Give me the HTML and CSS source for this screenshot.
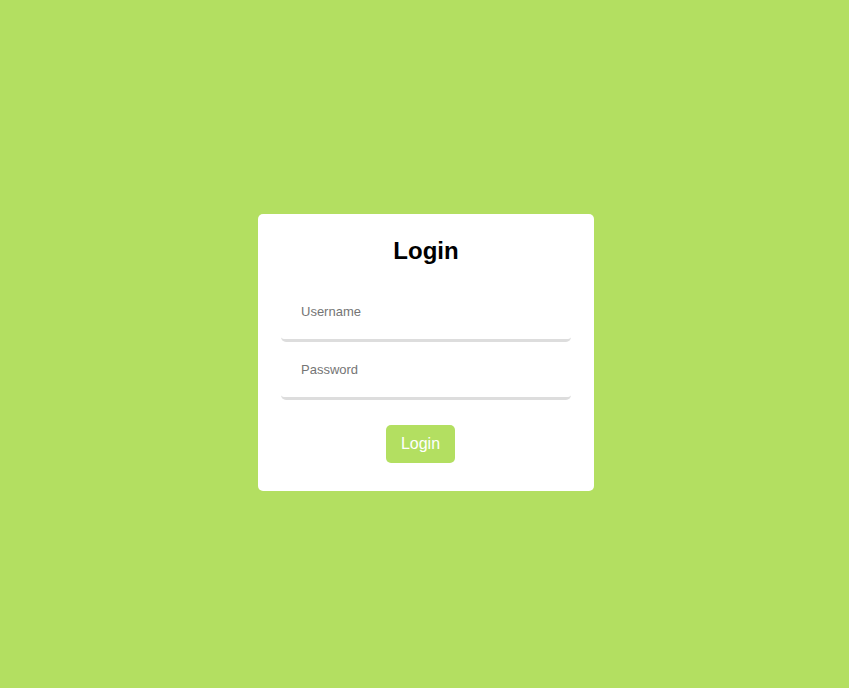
FILE: index.html
```html
<!DOCTYPE html>
<html lang="en">
  <head>
    <meta charset="UTF-8" />
    <meta name="viewport" content="width=device-width, initial-scale=1.0" />
    <title>Login</title>
    <link rel="stylesheet" href="styles.css">
  </head>
  <body>
    <div class="login-box">
      <h2>Login</h2>
      <form class="form">
        <input type="text" class="field" placeholder="Username" />
        <input type="password" class="field" placeholder="Password" />
        <div class="actions">
          <button type="submit" class="login-btn">Login</button>
        </div>
      </form>
    </div>
  </body>
</html>
```

FILE: styles.css
```css
* {
  box-sizing: border-box;
}
body {
  height: 100vh;
  padding-left: 3px;
  background-color: #b3df61;
  font-family: "Liberation Sans", Arial, sans-serif;
  display: flex;
  justify-content: center;
  align-items: center;
}
.login-box {
  width: 336px;
  background-color: #fff;
  border-radius: 5px;
  padding: 23px 23px 28px;
}
h2 {
  margin: 0 0 19px;
  text-align: center;
  font-size: 24px;
  line-height: 28px;
  color: #000;
}
.field {
  display: block;
  width: 100%;
  padding: 20px;
  font-family: inherit;
  font-size: 13px;
  line-height: 15px;
  border: none;
  border-bottom: 3px solid #ddd;
  border-radius: 5px;
  outline: none;
}
.field::placeholder {
  color: #757575;
}
.actions {
  display: flex;
  justify-content: center;
  padding-right: 11px;
  margin-top: 25px;
}
.login-btn {
  background-color: #b3df61;
  color: #fff;
  border: none;
  border-radius: 5px;
  padding: 10px 15px;
  font-family: inherit;
  font-size: 16px;
  line-height: 18px;
  cursor: pointer;
}
```
